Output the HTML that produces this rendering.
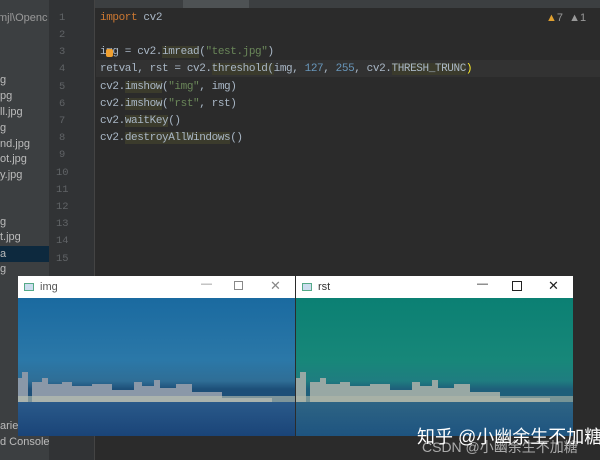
<!DOCTYPE html>
<html><head><style>
*{margin:0;padding:0;box-sizing:border-box}
body{width:600px;height:460px;overflow:hidden;background:#2b2b2b;position:relative;font-family:"Liberation Sans","Noto Sans CJK SC",sans-serif}
.side{position:absolute;left:0;top:0;width:49px;height:460px;background:#3c3f41;color:#bbb;font-size:11px}
.side div{position:absolute;left:0;white-space:nowrap}
.gut{position:absolute;left:49px;top:0;width:46px;height:460px;background:#313335;border-right:1px solid #444}
.gut div{position:absolute;left:10px;color:#606366;font:10.4px "Liberation Mono",monospace}
.tabs{position:absolute;left:49px;top:0;width:551px;height:8px;background:#3c3f41}
.code{position:absolute;left:100px;color:#a9b7c6;font:11px "Liberation Mono",monospace;letter-spacing:-0.4px;white-space:pre}
.kw{color:#cc7832}.st{color:#6a8759}.nm{color:#6897bb}.hl{background:#3b3b2c;}
.win{position:absolute;top:276px;width:277px;height:160px;background:#fff}
.tb{height:22px;font-size:11px;color:#333;position:relative}
.tb span{position:absolute;top:5px}
.img{position:absolute;left:0;top:22px;width:100%;height:138px;overflow:hidden}
.city{position:absolute;left:0;bottom:34px;width:100%;height:34px}
</style></head><body>
<div class="side">
<div style="top:12px;left:-2px;color:#999">mjl\Openc</div>
<div style="top:74px">g</div><div style="top:90px">pg</div><div style="top:106px">ll.jpg</div>
<div style="top:122px">g</div><div style="top:138px">nd.jpg</div><div style="top:153px">ot.jpg</div>
<div style="top:169px">y.jpg</div><div style="top:216px">g</div><div style="top:231px">t.jpg</div>
<div style="top:246px;width:49px;height:16px;background:#0d293e"></div>
<div style="top:248px">a</div><div style="top:263px">g</div>
<div style="top:420px">aries</div><div style="top:436px">d Consoles</div>
</div>
<div class="tabs"><div style="position:absolute;left:134px;top:0;width:66px;height:8px;background:#4e5254"></div></div>
<div class="gut">
<div style="top:12px">1</div><div style="top:29px">2</div><div style="top:46px">3</div><div style="top:63px">4</div>
<div style="top:81px">5</div><div style="top:98px">6</div><div style="top:115px">7</div><div style="top:132px">8</div>
<div style="top:149px">9</div><div style="top:167px;left:7px">10</div><div style="top:184px;left:7px">11</div><div style="top:201px;left:7px">12</div>
<div style="top:218px;left:7px">13</div><div style="top:235px;left:7px">14</div><div style="top:253px;left:7px">15</div>
</div>
<div style="position:absolute;left:96px;top:60px;width:504px;height:17px;background:#323232"></div>
<div class="code" style="top:12px"><span class="kw">import</span> cv2</div>
<div class="code" style="top:46px">img = cv2.<span class="hl">imread</span>(<span class="st">"test.jpg"</span>)</div>
<div class="code" style="top:63px">retval, rst = cv2.<span class="hl">threshold(</span>img, <span class="nm">127</span>, <span class="nm">255</span>, cv2.<span class="hl">THRESH_TRUNC</span><span style="color:#ffef28">)</span></div>
<div class="code" style="top:81px">cv2.<span class="hl">imshow</span>(<span class="st">"img"</span>, img)</div>
<div class="code" style="top:98px">cv2.<span class="hl">imshow</span>(<span class="st">"rst"</span>, rst)</div>
<div class="code" style="top:115px">cv2.<span class="hl">waitKey</span>()</div>
<div class="code" style="top:132px">cv2.<span class="hl">destroyAllWindows</span>()</div>
<div style="position:absolute;left:106px;top:49px;width:7px;height:8px;background:#f0a030;border-radius:2px"></div>
<div style="position:absolute;left:546px;top:12px;font-size:11px;color:#999"><span style="color:#e0a030">▲</span>7 &nbsp;▲1</div>

<div class="win" style="left:18px">
<div class="tb"><span style="left:6px;width:10px;height:8px;top:7px;border:1px solid #5a8;background:#cde"></span><span style="left:22px;color:#555">img</span>
<span style="left:183px;top:2px;color:#888">—</span><span style="left:216px;top:5px;width:9px;height:9px;border:1px solid #888"></span><span style="left:252px;top:2px;color:#888;font-size:13px">✕</span></div>
<div class="img" style="background:linear-gradient(#1a6aa0 0%,#2b78a8 45%,#2f6e96 60%,#1d4f78 66%,#1d4f78 100%)">
<svg class="city" viewBox="0 0 277 34" preserveAspectRatio="none"><path d="M0 34V10h4V4h6v30h4V14h10v-4h6v6h14v-2h10v4h20v-2h20v6h22v-8h8v4h12v-6h6v8h16v-4h16v8h30v6h50v4H0z" fill="#8a98a8"/><path d="M0 28h277v6H0z" fill="#c0c4b0" opacity=".6"/></svg>
<div style="position:absolute;left:0;bottom:0;width:100%;height:34px;background:linear-gradient(#2a5a8a,#1a4478)"></div>
</div>
</div>
<div class="win" style="left:296px">
<div class="tb"><span style="left:6px;width:10px;height:8px;top:7px;border:1px solid #5a8;background:#cde"></span><span style="left:22px">rst</span>
<span style="left:181px;top:2px;color:#222">—</span><span style="left:216px;top:5px;width:10px;height:10px;border:1.5px solid #222"></span><span style="left:252px;top:2px;color:#222;font-size:13px">✕</span></div>
<div class="img" style="background:linear-gradient(#0b8073 0%,#178779 45%,#1f7d80 60%,#1e5f7a 66%,#1e5f7a 100%)">
<svg class="city" viewBox="0 0 277 34" preserveAspectRatio="none"><path d="M0 34V10h4V4h6v30h4V14h10v-4h6v6h14v-2h10v4h20v-2h20v6h22v-8h8v4h12v-6h6v8h16v-4h16v8h30v6h50v4H0z" fill="#98a8a4"/><path d="M0 28h277v6H0z" fill="#b0b8a8" opacity=".6"/></svg>
<div style="position:absolute;left:0;bottom:0;width:100%;height:34px;background:linear-gradient(#2e6484,#1e5480)"></div>
</div>
</div>
<div style="position:absolute;left:417px;top:423px;font-size:18px;color:#fff;white-space:nowrap">知乎 @小幽余生不加糖</div>
<div style="position:absolute;left:422px;top:437px;font-size:14px;color:rgba(255,255,255,0.6);white-space:nowrap">CSDN @小幽余生不加糖</div>
</body></html>
